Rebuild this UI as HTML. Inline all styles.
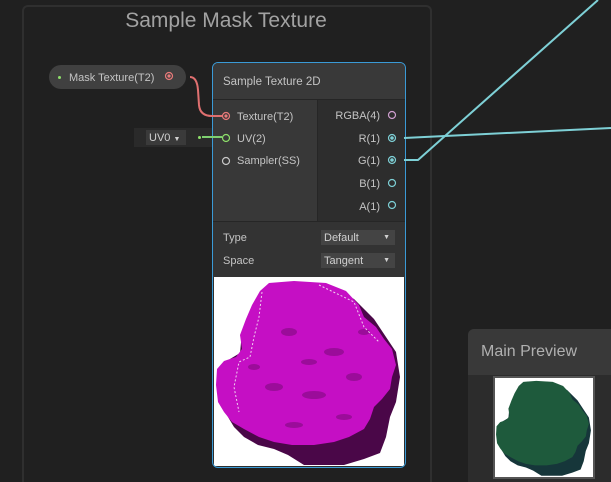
<!DOCTYPE html>
<html><head><meta charset="utf-8"><style>
html,body{margin:0;width:611px;height:482px;overflow:hidden}
body{background:#202020;position:relative;font-family:"Liberation Sans",sans-serif;}
.a{position:absolute}
.t{color:#c4c4c4;font-size:11px}
.dd{background:#444;color:#d0d0d0;font-size:11px;height:15px;line-height:16px;padding-left:3px;box-sizing:border-box}
</style></head><body>
<div class="a" style="left:22px;top:5px;width:406px;height:477px;border:2px solid #2f2f2f;border-bottom:none;border-radius:6px 6px 0 0;box-sizing:border-box;width:410px"></div>
<div class="a" style="left:24px;top:9px;width:404px;text-align:center;font-size:21px;color:#a2a2a2;">Sample Mask Texture</div>

<div class="a" style="left:49px;top:65px;width:137px;height:24px;background:#404040;border-radius:12px;"></div>
<div class="a" style="left:58px;top:76px;width:3px;height:3px;background:#8ee06a;border-radius:50%"></div>
<div class="a t" style="left:69px;top:72px;">Mask Texture(T2)</div>

<div class="a" style="left:134px;top:128px;width:78px;height:19px;background:#2a2a2a;"></div>
<div class="a dd" style="left:146px;top:130px;width:40px;background:#3a3a3a;">UV0 <span style="font-size:7px">▼</span></div>
<div class="a" style="left:198px;top:136px;width:3px;height:3px;background:#8ee06a;border-radius:50%"></div>

<svg width="0" height="0" style="position:absolute"><defs>
 <path id="base" d="M60 12 L112 8 L140 22 L160 42 L172 60 L182 75 L186 100 L182 125 L176 140 L172 160 L166 176 L150 182 L130 188 L90 188 L74 178 L60 172 L44 168 L30 160 L20 150 L14 140 L8 128 L5 110 L8 90 L16 82 L26 76 L28 55 L38 32 L48 18 Z"/>
 <path id="top" d="M55 6 L80 4 L112 6 L132 14 L145 28 L150 40 L162 50 L170 62 L178 72 L182 88 L178 100 L176 112 L168 122 L160 130 L156 142 L150 152 L135 160 L120 165 L100 168 L78 168 L60 165 L45 160 L30 152 L18 145 L10 135 L4 125 L2 108 L3 92 L10 84 L22 80 L28 72 L26 58 L32 42 L38 28 L46 14 Z"/>
</defs></svg>

<div class="a" style="left:212px;top:62px;width:192px;height:404px;border:1px solid #3a9ad6;border-radius:6px;background:#2e2e2e;overflow:hidden">
 <div class="a" style="left:0;top:0;width:192px;height:36px;background:#393939;border-bottom:1px solid #252525"></div>
 <div class="a t" style="left:10px;top:13px;font-size:11.5px">Sample Texture 2D</div>
 <div class="a" style="left:0;top:37px;width:104px;height:121px;background:#383838;"></div>
 <div class="a" style="left:104px;top:37px;width:88px;height:121px;background:#2d2d2d;border-left:1px solid #262626"></div>
 <div class="a" style="left:0;top:158px;width:192px;height:56px;background:#333;border-top:1px solid #262626"></div>
 <div class="a t" style="left:10px;top:169px;">Type</div>
 <div class="a t" style="left:10px;top:192px;">Space</div>
 <div class="a dd" style="left:108px;top:167px;width:74px;">Default<span style="position:absolute;right:5px;font-size:7px">▼</span></div>
 <div class="a dd" style="left:108px;top:190px;width:74px;">Tangent<span style="position:absolute;right:5px;font-size:7px">▼</span></div>
 <div class="a" style="left:1px;top:214px;width:190px;height:189px;background:#fff;">
  <svg width="190" height="189" viewBox="0 0 190 189">
   <use href="#base" fill="#4a0748"/>
   <use href="#top" fill="#c50fc4"/>
   <g fill="#7a0a78" opacity=".55">
    <ellipse cx="75" cy="55" rx="8" ry="4"/><ellipse cx="120" cy="75" rx="10" ry="4"/><ellipse cx="60" cy="110" rx="9" ry="4"/><ellipse cx="100" cy="118" rx="12" ry="4"/><ellipse cx="140" cy="100" rx="8" ry="4"/><ellipse cx="40" cy="90" rx="6" ry="3"/><ellipse cx="130" cy="140" rx="8" ry="3"/><ellipse cx="80" cy="148" rx="9" ry="3"/><ellipse cx="150" cy="55" rx="6" ry="3"/><ellipse cx="95" cy="85" rx="8" ry="3"/>
   </g>
   <path d="M48 15 L45 40 L40 60 L36 80 L25 85 L20 110 L25 135 M105 8 L140 25 L150 50 L165 65" stroke="#f0d0f0" stroke-width="1" stroke-dasharray="2 2" fill="none"/>
  </svg>
 </div>
</div>
<div class="a t" style="left:237px;top:111px;">Texture(T2)</div>
<div class="a t" style="left:237px;top:133px;">UV(2)</div>
<div class="a t" style="left:237px;top:155px;">Sampler(SS)</div>
<div class="a t" style="left:332px;top:110px;width:48px;text-align:right">RGBA(4)</div>
<div class="a t" style="left:332px;top:133px;width:48px;text-align:right">R(1)</div>
<div class="a t" style="left:332px;top:155px;width:48px;text-align:right">G(1)</div>
<div class="a t" style="left:332px;top:178px;width:48px;text-align:right">B(1)</div>
<div class="a t" style="left:332px;top:201px;width:48px;text-align:right">A(1)</div>

<svg class="a" style="left:0;top:0" width="611" height="482">
 <path d="M190 77 Q197 77 198 90 L199 105 Q200 116 212 116 L222 116" stroke="#e07070" stroke-width="2" fill="none"/>
 <path d="M202 137 L222 137" stroke="#7ed070" stroke-width="2" fill="none"/>
 <path d="M404 138 L611 128" stroke="#7ed0d6" stroke-width="2" fill="none"/>
 <path d="M404 160 L418 160 L598 0" stroke="#7ed0d6" stroke-width="2" fill="none"/>
 <g fill="none" stroke-width="1.2">
  <circle cx="169" cy="76" r="3.5" stroke="#e87a7a"/><circle cx="169" cy="76" r="1.6" fill="#e87a7a" stroke="none"/>
  <circle cx="226" cy="116" r="3.5" stroke="#e87a7a"/><circle cx="226" cy="116" r="1.6" fill="#e87a7a" stroke="none"/>
  <circle cx="226" cy="138" r="3.5" stroke="#8ee06a"/>
  <circle cx="226" cy="161" r="3.5" stroke="#c8c8c8"/>
  <circle cx="392" cy="115" r="3.5" stroke="#d0a0d0"/>
  <circle cx="392" cy="138" r="3.5" stroke="#7ed0d6"/><circle cx="392" cy="138" r="1.8" fill="#7ed0d6" stroke="none"/>
  <circle cx="392" cy="160" r="3.5" stroke="#7ed0d6"/><circle cx="392" cy="160" r="1.8" fill="#7ed0d6" stroke="none"/>
  <circle cx="392" cy="183" r="3.5" stroke="#7ed0d6"/>
  <circle cx="392" cy="205" r="3.5" stroke="#7ed0d6"/>
 </g>
</svg>

<div class="a" style="left:468px;top:329px;width:143px;height:153px;background:#2c2c2c;border-radius:6px 0 0 0;overflow:hidden">
 <div style="height:46px;background:#393939;color:#b0b0b0;font-size:16px;line-height:46px;padding-left:13px">Main Preview</div>
 <div class="a" style="left:25px;top:47px;width:102px;height:103px;background:#fff;border:2px solid #555;overflow:hidden;box-sizing:border-box">
  <svg width="98" height="99" viewBox="0 0 190 189">
   <use href="#base" fill="#16363a"/>
   <use href="#top" fill="#1e5a3c"/>
  </svg>
 </div>
</div>
</body></html>
